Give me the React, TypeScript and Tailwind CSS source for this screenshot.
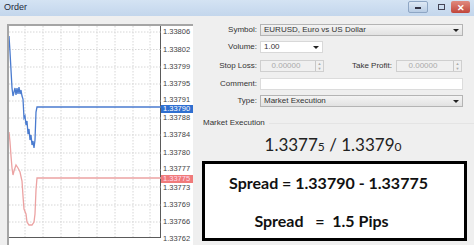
import React from "react";

const prices = [
  "1.33806",
  "1.33802",
  "1.33799",
  "1.33795",
  "1.33791",
  "",
  "1.33788",
  "1.33784",
  "1.33780",
  "1.33777",
  "1.33773",
  "1.33769",
  "1.33766",
  "1.33762",
];

const axisY = [32, 49.5, 67, 84, 100, 0, 118, 135, 153, 169, 188, 205, 222, 239];

const blue =
  "9,36 10,52 11,70 12,88 13,96 14,92 15,88 16,95 17,88 18,94 19,87 20,94 21,90 22,96 23,99 24,118 25,116 26,125 27,121 28,134 29,129 30,140 31,135 32,145 33,141 34,148 35,140 36,112 37,107 161,107";
const red =
  "9,132 10,142 11,156 12,168 13,175 14,171 16,165 18,168 20,172 22,181 23,196 24,209 26,214 27,222 29,225 32,225 34,222 35,214 36,190 37,178 161,178";

const Chart = () => {
  const gridX = [25, 43, 61, 79, 97, 115, 133, 150];
  const gridY = [32, 49.5, 67, 84, 101, 118, 135, 153, 170, 187, 205, 222];
  return (
    <div className="relative ml-[7px] mt-[8px] h-[221px] w-[186px] shrink-0 border-l-2 border-t-2 border-[#a5a5a5] bg-white">
      <div className="flex">
        {/* plot */}
        <div className="h-[212px] w-[152px] shrink-0 border-b border-r border-[#5a5a5a]">
          <svg width="152" height="211" viewBox="9 26 152 211" className="block">
            {gridX.map((x) => (
              <line key={x} x1={x} y1={26} x2={x} y2={237} stroke="#d6d6d6" strokeWidth="1" strokeDasharray="1.5 1.5" />
            ))}
            {gridY.map((y) => (
              <line key={y} x1={9} y1={y} x2={161} y2={y} stroke="#d6d6d6" strokeWidth="1" strokeDasharray="1.5 1.5" />
            ))}
            <polyline points={blue} fill="none" stroke="#4a7bcf" strokeWidth="1.3" />
            <polyline points={red} fill="none" stroke="#eca2a2" strokeWidth="1.3" />
          </svg>
        </div>
        {/* axis */}
        <div className="relative h-[219px] flex-1 font-['Liberation_Sans',sans-serif] text-[7.5px] text-[#444]">
          {prices.map((p, i) =>
            p ? (
              <div key={i} className="absolute left-[2px] leading-none" style={{ top: axisY[i] - 26 - 4 }}>
                {p}
              </div>
            ) : null
          )}
        </div>
      </div>
      {/* current price markers */}
      <div className="absolute left-[152px] top-[79px] h-[8px] w-[32px] bg-[#2f6fd0] pl-[2px] font-['Liberation_Sans',sans-serif] text-[7.5px] leading-[8px] text-white">
        1.33790
      </div>
      <div className="absolute left-[152px] top-[149px] h-[8px] w-[32px] bg-[#f07a7a] pl-[2px] font-['Liberation_Sans',sans-serif] text-[7.5px] leading-[8px] text-[#fde]">
        1.33775
      </div>
    </div>
  );
};

const Arrow = () => (
  <span className="ml-auto mr-[3px] h-0 w-0 border-l-[3px] border-r-[3px] border-t-[3px] border-l-transparent border-r-transparent border-t-[#222]" />
);

const Spin = () => (
  <div className="ml-auto flex h-full w-[8px] flex-col border-l border-[#c8c8c8]">
    <div className="flex flex-1 items-center justify-center text-[4px] leading-none text-[#aaa]">▲</div>
    <div className="flex flex-1 items-center justify-center text-[4px] leading-none text-[#aaa]">▼</div>
  </div>
);

const Label = ({ children }: { children: React.ReactNode }) => (
  <div className="w-[64px] pr-[3px] text-right">{children}</div>
);

const Form = () => (
  <div className="min-w-0 flex-1 pl-[3px] pt-[8px] font-['Liberation_Sans',sans-serif] text-[8px] text-[#333]">
    <div className="flex h-[12px] items-center">
      <Label>Symbol:</Label>
      <div className="flex h-[12px] w-[203px] items-center border border-[#b4b4b4] bg-gradient-to-b from-[#f4f4f4] to-[#e2e2e2] pl-[3px]">
        EURUSD, Euro vs US Dollar
        <Arrow />
      </div>
    </div>
    <div className="mt-[5px] flex h-[12px] items-center">
      <Label>Volume:</Label>
      <div className="flex h-[12px] w-[63px] items-center border border-[#d8d8d8] bg-white pl-[3px]">
        1.00
        <Arrow />
      </div>
    </div>
    <div className="mt-[7px] flex h-[12px] items-center">
      <Label>Stop Loss:</Label>
      <div className="flex h-[12px] w-[64px] items-center border border-[#cfcfcf] bg-[#f0f0f0] text-[#aaa]">
        <span className="ml-auto pr-[4px]">0.00000</span>
        <Spin />
      </div>
      <div className="ml-[24px] w-[48px] whitespace-nowrap pr-[4px] text-right">Take Profit:</div>
      <div className="flex h-[12px] w-[66px] items-center border border-[#cfcfcf] bg-[#f0f0f0] text-[#aaa]">
        <span className="ml-auto pr-[4px]">0.00000</span>
        <Spin />
      </div>
    </div>
    <div className="mt-[6px] flex h-[12px] items-center">
      <Label>Comment:</Label>
      <div className="h-[12px] w-[203px] border border-[#dcdcdc] bg-white" />
    </div>
    <div className="mt-[5px] flex h-[12px] items-center">
      <Label>Type:</Label>
      <div className="flex h-[12px] w-[203px] items-center border border-[#b4b4b4] bg-gradient-to-b from-[#f4f4f4] to-[#e2e2e2] pl-[3px]">
        Market Execution
        <Arrow />
      </div>
    </div>
    <div className="mt-[10px] flex items-center pl-[7px]">
      <span>Market Execution</span>
      <div className="ml-[4px] h-px flex-1 bg-[#e4e4e4]" />
    </div>
    <div className="ml-[2px] mt-[6px] w-[270px] text-center font-['Lato',sans-serif] text-[17px] leading-[20px] text-[#222]">
      1.3377<span className="text-[12px]">5</span> / 1.3379<span className="text-[12px]">0</span>
    </div>
    <div className="ml-[6px] mt-[4px] flex h-[80px] w-[265px] flex-col items-center border-[3px] border-black bg-white pr-[12px] font-['Lato',sans-serif] text-[16px] font-bold text-[#111]">
      <div className="mt-[9px] leading-[20px]">Spread = 1.33790 - 1.33775</div>
      <div className="mt-[18px] whitespace-pre pr-[14px] leading-[20px]">Spread   =  1.5 Pips</div>
    </div>
  </div>
);

export default function App() {
  return (
    <div className="h-[245px] w-[474px] overflow-hidden bg-[#efefef]">
      <div className="flex h-[16px] items-center bg-gradient-to-b from-[#d4e3f3] to-[#c3d6ec] pl-[4px]">
        <span className="font-['Liberation_Sans',sans-serif] text-[9px] text-[#1e2a3a]">Order</span>
        <div className="ml-auto flex items-start self-start pr-[4px] pt-[1px]">
          <div className="flex h-[12px] w-[20px] items-end justify-center rounded-[2px] border border-[#8ea6c4] bg-gradient-to-b from-[#dfe9f5] to-[#b8cce4] pb-[3px]">
            <div className="h-[2px] w-[6px] bg-[#334]" />
          </div>
          <div className="ml-[6px] flex h-[12px] w-[14px] items-center justify-center">
            <div className="h-[6px] w-[7px] border border-[#445]" />
          </div>
          <div className="ml-[3px] flex h-[12px] w-[19px] items-center justify-center rounded-[2px] bg-gradient-to-b from-[#e08a7e] to-[#c0443a] text-[9px] font-bold leading-none text-white">
            ✕
          </div>
        </div>
      </div>
      <div className="flex">
        <Chart />
        <Form />
      </div>
    </div>
  );
}
